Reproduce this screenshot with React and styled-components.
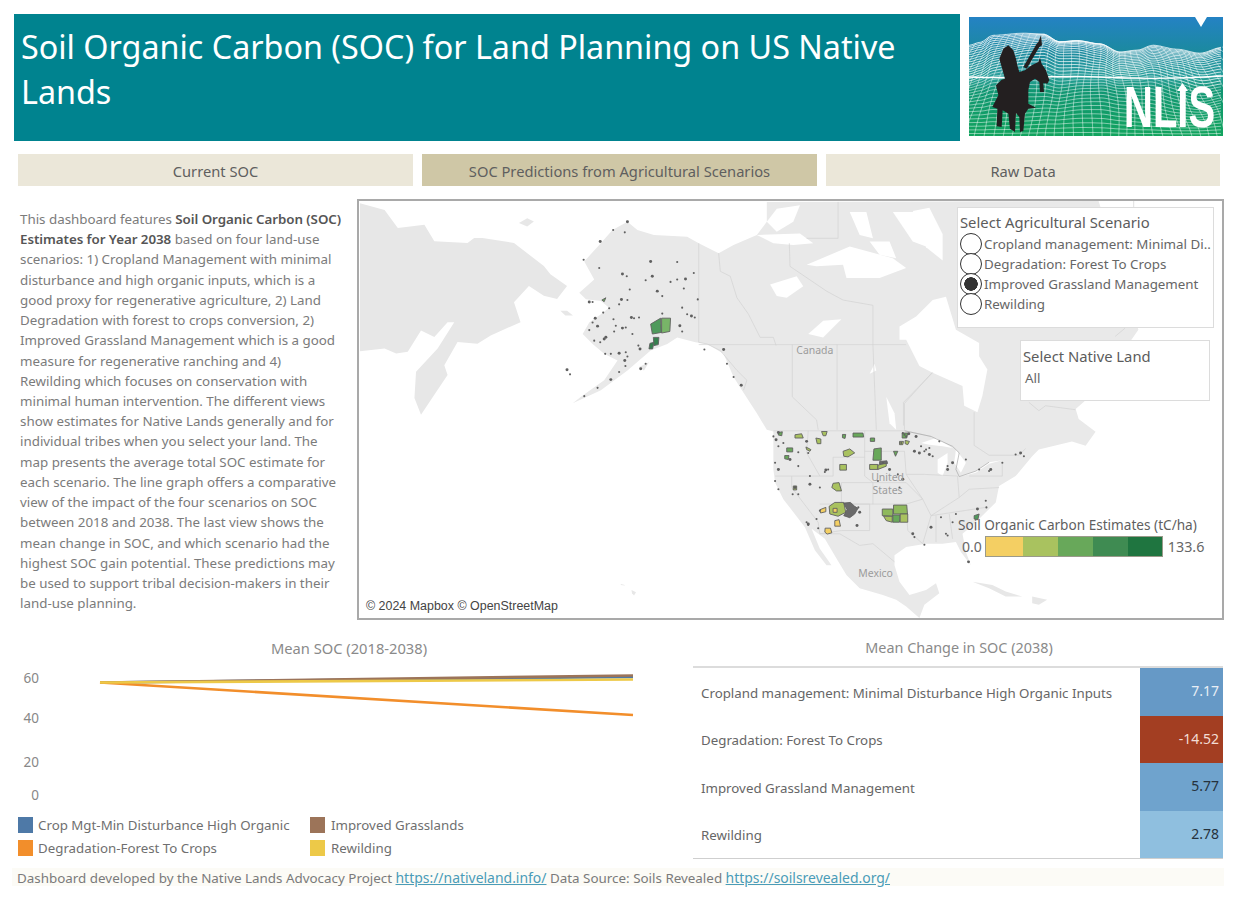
import React from 'react'
import styled, { createGlobalStyle } from 'styled-components'

const FONT = '"Noto Sans", "Open Sans", sans-serif'

const GlobalStyle = createGlobalStyle`
  html, body { margin: 0; padding: 0; background: #fff; }
  body { font-family: ${FONT}; width: 1236px; height: 899px; overflow: hidden; }
`

// map helpers: the outlines were traced on enlarged crops, so convert back to page pixels
const pts = (ox, oy, str) =>
  str.trim().split(/\s+/).map((p) => {
    const [x, y] = p.split(',').map(Number)
    return `${(ox + x / 3).toFixed(1)},${(oy + y / 3).toFixed(1)}`
  }).join(' ')
const north = (s) => pts(560, 200, s)
const south = (s) => pts(740, 420, s)
const hudson = (s) => pts(900, 199, s)
const asia = (s) => pts(356, 198, s)

const LAND = [
  north('55,275 100,235 70,180 115,130 155,85 200,60 230,85 280,100 380,105 415,125 475,155 520,130 590,100 620,60 620,0'),
  '1100,199 1140,329 1133,339 1110,380 1077,409 1080,419 1097,432 1087,446',
  south('1000,65 900,90 880,110 830,170 780,200 770,250 750,270 700,320 670,345 680,400 695,440 665,400 650,370 610,375 560,375 500,385 465,410 465,440 480,490 510,530 560,515 590,495 600,525 555,560 540,600 500,565 470,545 430,530 360,510 320,470 290,420 255,360 215,330 240,390 275,440 260,440 225,395 195,325 130,240 105,190 100,150 100,35'),
  north('620,690 590,640 545,570 520,530 490,460 440,430 405,425 350,410 320,430 270,450 200,510 120,570 35,610 60,590 130,540 170,480 130,460 95,430 65,400 85,365 120,340 145,320 120,300 75,295'),
].join(' ')

const RUSSIA = asia('6,10 80,30 120,85 200,75 230,125 330,130 350,115 375,115 470,130 560,200 580,225 630,260 600,300 560,290 515,260 470,310 490,370 400,410 360,435 300,430 260,500 270,530 230,590 190,650 170,600 175,520 240,450 290,370 270,370 230,415 190,395 150,460 115,465 80,450 6,458')

const WATER = [
  north('590,100 720,95 760,125 700,130 640,125'),
  north('740,190 870,135 1000,170 1040,200 960,230 860,230 850,190 770,195'),
  north('650,20 720,10 700,60 650,90 620,60'),
  north('870,30 920,30 940,110 900,100'),
  north('930,120 990,120 1010,170 960,160'),
  north('1000,30 1100,30 1140,150 1060,120'),
  north('630,250 710,225 730,255 680,290 650,285'),
  north('745,400 790,360 845,355 790,410'),
  north('930,520 945,490 950,510'),
  north('980,590 1005,640 1010,690 990,670'),
  hudson('0,380 50,350 100,300 140,290 170,390 240,430 240,470 265,510 250,590 235,640 195,620 190,560 100,520 60,500 20,420 0,420'),
  hudson('40,30 90,20 130,100 130,180 80,140'),
  south('545,70 590,55 640,85 610,80 570,75'),
  south('595,120 625,100 625,130 610,170 595,160'),
  south('650,90 680,130 665,160 645,130'),
  south('660,172 710,155 750,128 790,122 750,133 710,160'),
]

const ISLANDS = [
  asia('485,70 510,55 530,65 510,80'),
  asia('610,335 630,335 648,350 625,350'),
  south('700,490 760,500 800,520 850,535 800,535 750,510'),
  south('880,535 925,545 900,560 880,555'),
  north('235,500 265,485 250,510'),
  pts(600, 540, '60,137 72,140 72,142 60,140'),
  pts(600, 540, '92,155 106,162 100,172 94,165'),
]

const BORDERS = [
  north('415,125 415,425 440,430 480,450 530,510 560,540 550,570'),
  north('475,155 480,210 510,225 530,290 565,340 600,410 640,410 648,435'),
  north('415,432 1040,432'),
  north('688,125 690,195 800,270 850,297 940,313 940,432 950,690'),
  north('835,0 835,110 740,110'),
  north('697,432 697,590 770,660 775,690'),
  north('832,432 832,690'),
  north('1118,517 1035,610 1035,690'),
  south('205,33 200,100 240,170 105,170'),
  south('155,170 155,205 235,310 240,345'),
  south('240,170 280,170 280,113 375,113 375,33'),
  south('375,113 375,170 400,190 305,190 305,255 400,255 400,190'),
  south('240,255 390,255 390,335 305,335 240,345'),
  south('375,95 495,95 500,165 555,165'),
  south('400,190 500,190 550,240 500,255 400,255'),
  south('500,255 505,335 550,375'),
  south('500,165 550,240 575,290 550,375'),
  south('575,290 740,265'),
  south('590,290 590,370'),
  south('630,285 640,360'),
  south('555,165 655,170 660,235 575,290'),
  south('660,235 690,210 780,205'),
  south('690,170 790,170 790,130'),
  south('240,345 300,345 360,380 400,375 465,430'),
  south('100,33 495,33 575,50'),
  hudson('225,640 225,740 270,770 360,770 380,750'),
  hudson('390,610 420,635 440,620 530,632'),
  hudson('100,520 12,610 12,680'),
  hudson('650,410 680,385'),
  hudson('706,0 706,25'),
]

const RESERVES = [
  // alaska
  { p: north('270,370 300,352 302,395 275,400'), c: '#4f9a5c' },
  { p: north('303,352 330,352 328,392 303,397'), c: '#78b568' },
  { p: north('278,410 295,410 293,432 280,435'), c: '#35804e' },
  { p: north('268,428 280,425 276,445 265,445'), c: '#35804e' },
  { p: north('123,297 135,290 130,302'), c: '#68a85a' },
  // lower 48
  { p: south('165,45 185,42 190,55 165,55'), c: '#a9c25f' },
  { p: south('245,35 262,35 258,48 250,48'), c: '#a9c25f' },
  { p: south('340,40 370,40 372,52 340,52'), c: '#68a85a' },
  { p: south('228,55 243,58 243,72 232,72'), c: '#a9c25f' },
  { p: south('140,85 158,85 158,97 140,97'), c: '#68a85a' },
  { p: south('198,82 213,90 210,95 200,90'), c: '#a9c25f' },
  { p: south('310,95 330,88 345,100 325,112 312,110'), c: '#a9c25f' },
  { p: south('403,88 425,85 425,122 400,122'), c: '#68a85a' },
  { p: south('462,95 475,95 468,110'), c: '#68a85a' },
  { p: south('390,135 415,135 415,150 390,150'), c: '#a9c25f' },
  { p: south('415,137 440,130 440,140 415,150'), c: '#a9c25f' },
  { p: south('300,135 320,135 320,152 300,152'), c: '#a9c25f' },
  { p: south('280,192 298,190 305,215 290,215 276,205'), c: '#a9c25f' },
  { p: south('115,38 127,36 125,48 115,46'), c: '#68a85a' },
  { p: south('392,55 405,55 405,65 392,65'), c: '#68a85a' },
  { p: south('308,44 318,44 316,56 308,54'), c: '#68a85a' },
  { p: south('480,65 492,65 490,75 480,75'), c: '#a9c25f' },
  { p: south('497,62 510,65 505,75 497,72'), c: '#a9c25f' },
  { p: south('488,40 505,40 502,55 488,55'), c: '#68a85a' },
  { p: south('134,108 147,108 145,120 134,118'), c: '#68a85a' },
  { p: south('428,270 460,270 460,292 428,290'), c: '#8fb95d' },
  { p: south('432,292 458,292 458,310 440,305'), c: '#a9c25f' },
  { p: south('462,258 502,258 504,285 462,285'), c: '#8fb95d' },
  { p: south('460,288 482,288 480,310 460,310'), c: '#68a85a' },
  { p: south('482,285 505,285 505,310 482,310'), c: '#a9c25f' },
  { p: south('268,262 285,250 312,250 318,280 295,292 270,285'), c: '#a9c25f' },
  { p: south('280,268 292,268 292,280 280,280'), c: '#f4cf63' },
  { p: south('285,305 298,302 302,322 285,322'), c: '#f4cf63' },
  { p: south('240,272 258,265 258,278 242,282'), c: '#f4cf63' },
  { p: south('256,328 272,328 276,342 262,346 255,340'), c: '#f4cf63' },
  { p: south('705,290 720,285 716,302 705,300'), c: '#4f9a5c' },
  { p: south('160,200 170,200 170,212 160,212'), c: '#a9c25f' },
  // pueblo cluster and the denser small areas read as solid grey at this zoom
  { p: south('312,252 332,250 345,262 355,268 345,285 330,296 312,290 322,272'), c: '#6a6a6a' },
  { p: south('420,126 442,124 444,132 420,134'), c: '#6a6a6a' },
]

// small tribal areas, given as x,y on the same crops
const NORTH_DOTS = '200,60 157,85 192,92 118,120 68,175 115,200 185,218 198,225 255,237 275,225 330,242 350,235 375,233 400,215 350,182 270,180 207,265 370,262 290,270 305,285 200,297 182,295 175,310 145,322 85,303 95,303 127,335 103,352 95,365 158,355 110,376 85,388 165,375 185,382 195,380 220,352 212,350 235,350 160,392 135,410 100,420 118,425 130,415 215,400 233,435 238,445 150,460 133,460 175,458 195,455 200,468 192,480 194,497 175,515 150,538 110,563 70,588 18,508 27,522 255,490 240,505 365,320 380,340 393,345 403,350 365,392 358,375 412,295 432,447 490,447 500,490 520,530 543,555 305,338'
const SOUTH_DOTS = '100,50 108,60 130,70 115,80 200,65 175,98 205,100 150,120 175,140 105,130 115,150 105,185 115,210 165,205 158,225 175,225 210,195 240,205 210,170 258,152 265,150 240,275 205,315 230,300 235,328 352,320 415,185 430,130 450,150 475,165 490,40 530,50 545,80 555,95 570,105 580,110 625,140 640,130 680,120 720,150 755,150 650,285 605,295 575,325 620,345 625,350 520,345 525,355 555,378 688,430 740,245 742,265 715,270 640,310 790,130 845,100 855,110 830,105 490,180 480,205 560,90 540,100 600,65 356,265 360,280 205,318 200,310 115,38 495,45 500,50 508,42 255,158 485,70 525,95 570,85 750,155 625,150'
const dotList = (ox, oy, str) =>
  str.split(' ').map((p) => {
    const [x, y] = p.split(',').map(Number)
    return [ox + x / 3, oy + y / 3]
  })
const DOTS = [...dotList(560, 200, NORTH_DOTS), ...dotList(740, 420, SOUTH_DOTS)]

function WorldMap() {
  return (
    <MapSvg viewBox="357 199 867 421" preserveAspectRatio="none">
      <polygon points={RUSSIA} fill="#e7e7e7" />
      <polygon points={LAND} fill="#e9e9e9" />
      {ISLANDS.map((p, i) => <polygon key={i} points={p} fill="#e7e7e7" />)}
      {WATER.map((p, i) => <polygon key={i} points={p} fill="#fff" />)}
      {BORDERS.map((p, i) => <polyline key={i} points={p} fill="none" stroke="#d2d2d2" strokeWidth="0.7" />)}
      <polyline points={south('495,33 575,50 640,80 660,100 650,150 660,172 710,155 750,128')} fill="none" stroke="#a8a8a8" strokeWidth="0.7" />
      {RESERVES.map((r, i) => <polygon key={i} points={r.p} fill={r.c} stroke="#5f5f5f" strokeWidth="0.9" />)}
      {DOTS.map(([x, y], i) => <circle key={i} cx={x} cy={y} r={i % 3 === 0 ? 1.5 : 1.05} fill="#5f5f5f" />)}
      <MapLabel x="815" y="353" textAnchor="middle">Canada</MapLabel>
      <MapLabel x="888" y="482" textAnchor="middle">United</MapLabel>
      <MapLabel x="888" y="495" textAnchor="middle">States</MapLabel>
      <MapLabel x="876" y="579" textAnchor="middle">Mexico</MapLabel>
    </MapSvg>
  )
}

// logo terrain
const RIDGE = [[0,28],[11,25],[24,18],[54,16],[74,17],[91,25],[108,24],[131,27],[151,35],[168,33],[184,28],[208,32],[231,36],[254,30]]
const ridgeAt = (x) => {
  for (let i = 1; i < RIDGE.length; i++) {
    if (x <= RIDGE[i][0]) {
      const [x0, y0] = RIDGE[i - 1]
      const [x1, y1] = RIDGE[i]
      const t = (x - x0) / (x1 - x0)
      const s = t * t * (3 - 2 * t)
      return y0 + (y1 - y0) * s
    }
  }
  return 30
}
const surface = (x, t) => {
  const r = ridgeAt(x)
  const bump = Math.sin(x / 23 + t * 6) * 3 * (1 - t) * t * 4 + Math.sin(x / 37 + 1.5) * 5 * t * (1 - t) * 4
  return r + (119 - r) * Math.pow(t, 1.5) + bump
}
const rowPaths = Array.from({ length: 34 }, (_, j) => {
  const t = (j + 0.3) / 34
  let d = ''
  for (let x = 0; x <= 254; x += 3) d += `${d ? 'L' : 'M'}${x} ${surface(x, t).toFixed(1)}`
  return d
})
const colPaths = Array.from({ length: 42 }, (_, i) => {
  const x0 = (i / 41) * 254
  let d = ''
  for (let k = 0; k <= 30; k++) {
    const t = k / 30
    const x = x0 + (x0 - 127) * t * 0.45 + Math.sin(t * 8 + i * 0.6) * 1.6
    d += `${d ? 'L' : 'M'}${x.toFixed(1)} ${surface(x, t).toFixed(1)}`
  }
  return d
})

function Logo() {
  return (
    <LogoSvg viewBox="0 0 254 119">
      <defs>
        <linearGradient id="logoSky" x1="0" y1="0" x2="0" y2="1">
          <stop offset="0" stopColor="#2482c4" />
          <stop offset="0.3" stopColor="#1b8a9e" />
          <stop offset="0.5" stopColor="#2ba09c" />
          <stop offset="0.62" stopColor="#109672" />
          <stop offset="1" stopColor="#12a45e" />
        </linearGradient>
        <clipPath id="logoClip">
          <rect width="254" height="119" />
        </clipPath>
      </defs>
      <rect width="254" height="119" fill="url(#logoSky)" />
      <polygon points="226,0 238,0 232,10" fill="#fff" />
      <g clipPath="url(#logoClip)">
        {rowPaths.map((d, i) => (
          <path key={i} d={d} fill="none" stroke="#fff" strokeWidth={i < 17 ? 0.8 : 0.6} opacity={i < 17 ? 0.9 : 0.8} />
        ))}
        {colPaths.map((d, i) => <path key={i} d={d} fill="none" stroke="#fff" strokeWidth="0.6" opacity="0.75" />)}
        <path d="M0 60C60 62 90 58 130 60S210 62 254 59" fill="none" stroke="#fff" strokeWidth="1.4" />
      </g>
      <g transform="translate(-9 -16.67) scale(0.3333)" fill="#231f20">
        <polygon points="243,105 246,135 238,140 200,205 190,200 230,130 235,125" />
        <polygon points="145,135 160,150 168,175 172,195 178,215 195,210 215,195 235,185 240,172 245,190 258,210 268,240 262,250 250,248 252,275 240,275 238,245 225,235 210,245 205,270 205,310 228,322 205,325 195,340 190,392 180,395 178,350 168,338 165,395 150,385 145,340 128,330 125,380 110,378 112,325 97,320 115,285 108,255 125,238 135,235 125,200 118,175 130,145" />
      </g>
      <polygon points="213.5,66 219,74 208,74" fill="#fff" />
      <LogoWord transform="translate(155 110) scale(0.69 1)">NLIS</LogoWord>
    </LogoSvg>
  )
}

const SERIES = [
  { y: 677, color: '#4e79a7' },
  { y: 675.5, color: '#9c7459' },
  { y: 715, color: '#f28e2b' },
  { y: 679.5, color: '#edc948' },
]

function LineChart() {
  return (
    <ChartSvg viewBox="14 660 666 145">
      {[[60, 683], [40, 723], [20, 767], [0, 800]].map(([v, y]) => (
        <AxisText key={v} x="39" y={y} textAnchor="end">{v}</AxisText>
      ))}
      {SERIES.map((s) => (
        <line key={s.color} x1="100" y1="682.5" x2="633" y2={s.y} stroke={s.color} strokeWidth="2.6" />
      ))}
    </ChartSvg>
  )
}

const LEGEND = [
  { label: 'Crop Mgt-Min Disturbance High Organic', color: '#4e79a7' },
  { label: 'Improved Grasslands', color: '#9c7459' },
  { label: 'Degradation-Forest To Crops', color: '#f28e2b' },
  { label: 'Rewilding', color: '#edc948' },
]

const CHANGES = [
  { label: 'Cropland management: Minimal Disturbance High Organic Inputs', value: '7.17', bg: '#6699c6', fg: '#e8eef5' },
  { label: 'Degradation: Forest To Crops', value: '-14.52', bg: '#a33e22', fg: '#f3ddd5' },
  { label: 'Improved Grassland Management', value: '5.77', bg: '#6fa3cd', fg: '#26323c' },
  { label: 'Rewilding', value: '2.78', bg: '#8fbfdf', fg: '#26323c' },
]

const SCENARIOS = [
  { label: 'Cropland management: Minimal Di..' },
  { label: 'Degradation: Forest To Crops' },
  { label: 'Improved Grassland Management', on: true },
  { label: 'Rewilding' },
]

const RAMP = [
  { c: '#f4cf63', w: 37 },
  { c: '#a9c25f', w: 35 },
  { c: '#68a85a', w: 35 },
  { c: '#3f8b52', w: 35 },
  { c: '#1f7540', w: 34 },
]

export default function App() {
  return (
    <Page>
      <GlobalStyle />
      <TopRow>
        <Title>Soil Organic Carbon (SOC) for Land Planning on US Native Lands</Title>
        <Logo />
      </TopRow>
      <Tabs>
        <Tab>Current SOC</Tab>
        <Tab $active>SOC Predictions from Agricultural Scenarios</Tab>
        <Tab>Raw Data</Tab>
      </Tabs>
      <Main>
        <Intro>
          This dashboard features <b>Soil Organic Carbon (SOC)</b><br />
          <b>Estimates for Year 2038</b> based on four land-use<br />
          scenarios: 1) Cropland Management with minimal<br />
          disturbance and high organic inputs, which is a<br />
          good proxy for regenerative agriculture, 2) Land<br />
          Degradation with forest to crops conversion, 2)<br />
          Improved Grassland Management which is a good<br />
          measure for regenerative ranching and 4)<br />
          Rewilding which focuses on conservation with<br />
          minimal human intervention. The different views<br />
          show estimates for Native Lands generally and for<br />
          individual tribes when you select your land. The<br />
          map presents the average total SOC estimate for<br />
          each scenario. The line graph offers a comparative<br />
          view of the impact of the four scenarios on SOC<br />
          between 2018 and 2038. The last view shows the<br />
          mean change in SOC, and which scenario had the<br />
          highest SOC gain potential. These predictions may<br />
          be used to support tribal decision-makers in their<br />
          land-use planning.
        </Intro>
        <MapFrame>
          <WorldMap />
          <ScenarioPanel>
            <PanelTitle>Select Agricultural Scenario</PanelTitle>
            {SCENARIOS.map((s) => (
              <RadioRow key={s.label}>
                <Radio $on={s.on} />
                {s.label}
              </RadioRow>
            ))}
          </ScenarioPanel>
          <LandPanel>
            <PanelTitle>Select Native Land</PanelTitle>
            <LandValue>All</LandValue>
          </LandPanel>
          <ScaleLegend>
            <ScaleTitle>Soil Organic Carbon Estimates (tC/ha)</ScaleTitle>
            <ScaleRow>
              <ScaleEnd>0.0</ScaleEnd>
              <Ramp>
                {RAMP.map((r) => <RampStep key={r.c} $c={r.c} $w={r.w} />)}
              </Ramp>
              <ScaleMax>133.6</ScaleMax>
            </ScaleRow>
          </ScaleLegend>
          <Attribution>© 2024 Mapbox © OpenStreetMap</Attribution>
        </MapFrame>
      </Main>
      <Bottom>
        <ChartCol>
          <ChartTitle>Mean SOC (2018-2038)</ChartTitle>
          <LineChart />
          <Legend>
            {LEGEND.map((l) => (
              <LegendItem key={l.label}>
                <Swatch $c={l.color} />
                {l.label}
              </LegendItem>
            ))}
          </Legend>
        </ChartCol>
        <TableCol>
          <TableTitle>Mean Change in SOC (2038)</TableTitle>
          <ChangeTable>
            {CHANGES.map((c) => (
              <ChangeRow key={c.label}>
                <ChangeLabel>{c.label}</ChangeLabel>
                <ChangeValue $bg={c.bg} $fg={c.fg}>{c.value}</ChangeValue>
              </ChangeRow>
            ))}
          </ChangeTable>
        </TableCol>
      </Bottom>
      <Footer>
        Dashboard developed by the Native Lands Advocacy Project <FooterLink href="#">https://nativeland.info/</FooterLink> Data Source: Soils Revealed <FooterLink href="#">https://soilsrevealed.org/</FooterLink>
      </Footer>
    </Page>
  )
}

const Page = styled.div`
  width: 1236px;
  height: 899px;
  padding: 14px 12px 0 14px;
  box-sizing: border-box;
  display: flex;
  flex-direction: column;
`

const TopRow = styled.div`
  display: flex;
  gap: 9px;
  height: 127px;
`

const Title = styled.h1`
  width: 946px;
  height: 127px;
  box-sizing: border-box;
  margin: 0;
  padding: 10px 40px 0 7px;
  background: #00838f;
  color: #fff;
  font-size: 32.3px;
  font-weight: 400;
  line-height: 45px;
`

const LogoSvg = styled.svg`
  width: 254px;
  height: 119px;
  margin-top: 3px;
  flex: none;
  overflow: visible;
`

const LogoWord = styled.text`
  font-family: "Liberation Sans", sans-serif;
  font-weight: 700;
  font-size: 58px;
  fill: #fff;
`

const Tabs = styled.div`
  display: flex;
  gap: 9px;
  margin: 13px 0 0 4px;
`

const Tab = styled.div`
  width: 395px;
  height: 32px;
  box-sizing: border-box;
  padding-top: 2px;
  display: flex;
  align-items: center;
  justify-content: center;
  background: ${(p) => (p.$active ? '#cfc7a6' : '#ebe7d9')};
  color: #5f5f5f;
  font-size: 14.7px;

  &:last-child {
    width: 394px;
  }
`

const Main = styled.div`
  display: flex;
  margin-top: 13px;
  height: 421px;
`

const Intro = styled.p`
  width: 343px;
  flex: none;
  margin: 0;
  padding: 10px 0 0 6px;
  box-sizing: border-box;
  color: #7b7b7b;
  font-size: 13.35px;
  line-height: 20.22px;
  white-space: nowrap;

  b {
    color: #555;
    font-weight: 600;
    letter-spacing: -0.05px;
  }
`

const MapFrame = styled.div`
  position: relative;
  width: 867px;
  height: 421px;
  box-sizing: border-box;
  border: 2px solid #a9a9a9;
  background: #fff;
`

const MapSvg = styled.svg`
  display: block;
  width: 100%;
  height: 100%;
`

const MapLabel = styled.text`
  font-family: ${FONT};
  font-size: 10.5px;
  fill: #9c9c9c;
`

const ScenarioPanel = styled.div`
  position: absolute;
  left: 598px;
  top: 6px;
  width: 257px;
  height: 121px;
  box-sizing: border-box;
  padding: 4px 0 0 2px;
  background: #fff;
  border: 1px solid #dcdcdc;
  color: #5f5f5f;
`

const PanelTitle = styled.div`
  font-size: 14.8px;
  line-height: 20px;
  color: #5c5c5c;
  margin-bottom: 2px;
`

const RadioRow = styled.div`
  display: flex;
  align-items: center;
  gap: 2px;
  height: 20px;
  font-size: 13.35px;
  white-space: nowrap;
  color: #666;
`

const Radio = styled.span`
  width: 20px;
  height: 20px;
  flex: none;
  border: 1px solid #333;
  border-radius: 50%;
  background: ${(p) => (p.$on ? 'radial-gradient(circle, #333 0 6.5px, #fff 7px)' : '#fff')};
`

const LandPanel = styled.div`
  position: absolute;
  left: 661px;
  top: 139px;
  width: 190px;
  height: 61px;
  box-sizing: border-box;
  padding: 5px 0 0 2px;
  background: #fff;
  border: 1px solid #dcdcdc;
`

const LandValue = styled.div`
  padding-left: 2px;
  font-size: 13.35px;
  line-height: 20px;
  color: #666;
`

const ScaleLegend = styled.div`
  position: absolute;
  left: 599px;
  top: 314px;
  color: #5f5f5f;
`

const ScaleTitle = styled.div`
  font-size: 13.6px;
  line-height: 20px;
  white-space: nowrap;
`

const ScaleRow = styled.div`
  display: flex;
  align-items: center;
  gap: 3px;
  margin: 1px 0 0 4px;
  font-size: 14px;
`

const ScaleEnd = styled.span`
  color: #666;
`

const ScaleMax = styled(ScaleEnd)`
  margin-left: 2px;
  font-size: 14.3px;
`

const Ramp = styled.div`
  display: flex;
  height: 19px;
  border: 1px solid #9a9a8a;
`

const RampStep = styled.div`
  width: ${(p) => p.$w}px;
  background: ${(p) => p.$c};
`

const Attribution = styled.div`
  position: absolute;
  left: 5px;
  bottom: 3px;
  padding: 0 2px;
  background: rgba(255, 255, 255, 0.7);
  color: #444;
  font-family: "Liberation Sans", sans-serif;
  font-size: 12.45px;
  line-height: 17px;
`

const Bottom = styled.div`
  display: flex;
  margin-top: 18px;
  height: 222px;
`

const ChartCol = styled.div`
  width: 679px;
  flex: none;
`

const ChartTitle = styled.div`
  width: 670px;
  text-align: center;
  color: #8a8a8a;
  font-size: 14.7px;
  line-height: 20px;
`

const ChartSvg = styled.svg`
  display: block;
  width: 666px;
  height: 145px;
  margin-top: 2px;
`

const AxisText = styled.text`
  font-family: ${FONT};
  font-size: 13.5px;
  fill: #888;
`

const Legend = styled.div`
  display: grid;
  grid-template-columns: 292px 1fr;
  row-gap: 7px;
  margin: 12px 0 0 4px;
`

const LegendItem = styled.div`
  display: flex;
  align-items: center;
  gap: 6px;
  height: 16px;
  color: #6f6f6f;
  font-size: 13.3px;
  white-space: nowrap;

  &:nth-child(odd) {
    gap: 5px;
  }
`

const Swatch = styled.span`
  width: 15px;
  height: 16px;
  background: ${(p) => p.$c};
`

const TableCol = styled.div`
  width: 530px;
  flex: none;
`

const TableTitle = styled.div`
  width: 532px;
  text-align: center;
  color: #8a8a8a;
  font-size: 14.4px;
  line-height: 20px;
`

const ChangeTable = styled.div`
  margin-top: 8px;
  border-top: 2px solid #dcdcdc;
  border-bottom: 1px solid #cfcfcf;
`

const ChangeRow = styled.div`
  display: flex;
  height: 47.5px;
`

const ChangeLabel = styled.div`
  flex: 1;
  display: flex;
  align-items: center;
  padding: 2px 0 0 8px;
  color: #666;
  font-size: 13.3px;
  white-space: nowrap;
`

const ChangeValue = styled.div`
  width: 83px;
  box-sizing: border-box;
  padding: 0 4px 2px 0;
  display: flex;
  align-items: center;
  justify-content: flex-end;
  background: ${(p) => p.$bg};
  color: ${(p) => p.$fg};
  font-size: 14px;
`

const Footer = styled.div`
  margin: 8px 0 0 -2px;
  width: 1212px;
  height: 18px;
  box-sizing: border-box;
  padding: 1px 0 0 5px;
  background: #fcfbf6;
  color: #7a7a7a;
  font-size: 13.4px;
  line-height: 18px;
  white-space: nowrap;
`

const FooterLink = styled.a`
  color: #4a9cb8;
  font-size: 13.95px;
  text-decoration: underline;
`
